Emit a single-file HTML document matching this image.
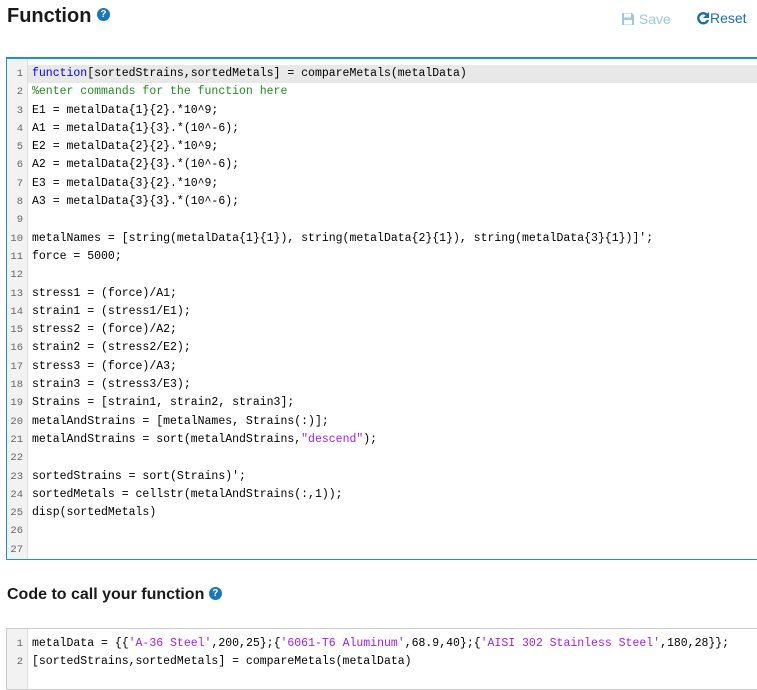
<!DOCTYPE html><html><head><style>
body{margin:0;background:#fff;font-family:"Liberation Sans",sans-serif;width:757px;height:683px;overflow:hidden;position:relative}
.h{position:absolute;font-weight:bold;color:#1a1a1a}
.q{display:inline-block;background:#1a78b4;color:#fff;border-radius:50%;text-align:center;font-weight:bold;vertical-align:middle}
.ed{position:absolute;left:6px;right:0;background:#fff;overflow:hidden}
.g{position:absolute;left:0;top:0;bottom:0;width:20px;background:#f2f2f2;border-right:1px solid #ddd}
pre{margin:0;font-family:"Liberation Mono",monospace;font-size:11.5px;line-height:18.3px;color:#000;position:relative}
.ln{display:inline-block;width:21px;text-align:right;padding-right:5px;box-sizing:border-box;color:#666;font-size:10.5px;margin-right:4px}
.k{color:#0000ff}.c{color:#228b22}.s{color:#a020f0}
.row{display:block;height:18.3px}
.cur{background:linear-gradient(to right,transparent 21px,#e8e8e8 21px)}
</style></head><body>
<div class="h" style="left:7px;top:5px;font-size:20px">Function <span class="q" style="width:13px;height:13px;font-size:10px;line-height:13px;margin-top:-4px">?</span></div>
<div style="position:absolute;left:621px;top:11px;color:#9cc8e4;font-size:14px"><svg width="14" height="14" viewBox="0 0 14 14" style="vertical-align:-2px"><path d="M1 1h10l2 2v10H1z" fill="#9cc8e4"/><rect x="3" y="1.5" width="7" height="4" fill="#fff"/><rect x="3" y="8" width="8" height="4.5" fill="#fff"/></svg> Save</div>
<div style="position:absolute;left:696px;top:10px;color:#1a6fa8;font-size:14px"><svg width="14" height="14" viewBox="0 0 14 14" style="vertical-align:-2px"><path d="M11.5 4.5A5 5 0 1 0 12 9" fill="none" stroke="#1a6fa8" stroke-width="2.4"/><path d="M13 1v6H7z" fill="#1a6fa8"/></svg>Reset</div>
<div class="ed" style="top:57px;height:500px;border:1px solid #1e8fe0;border-top:2px solid #1e8fe0;border-right:none">
<div class="g"></div>
<pre style="padding-top:6px"><span class="row cur"><span class="ln">1</span><span class="k">function</span>[sortedStrains,sortedMetals] = compareMetals(metalData)</span><span class="row"><span class="ln">2</span><span class="c">%enter commands for the function here</span></span><span class="row"><span class="ln">3</span>E1 = metalData{1}{2}.*10^9;</span><span class="row"><span class="ln">4</span>A1 = metalData{1}{3}.*(10^-6);</span><span class="row"><span class="ln">5</span>E2 = metalData{2}{2}.*10^9;</span><span class="row"><span class="ln">6</span>A2 = metalData{2}{3}.*(10^-6);</span><span class="row"><span class="ln">7</span>E3 = metalData{3}{2}.*10^9;</span><span class="row"><span class="ln">8</span>A3 = metalData{3}{3}.*(10^-6);</span><span class="row"><span class="ln">9</span></span><span class="row"><span class="ln">10</span>metalNames = [string(metalData{1}{1}), string(metalData{2}{1}), string(metalData{3}{1})]';</span><span class="row"><span class="ln">11</span>force = 5000;</span><span class="row"><span class="ln">12</span></span><span class="row"><span class="ln">13</span>stress1 = (force)/A1;</span><span class="row"><span class="ln">14</span>strain1 = (stress1/E1);</span><span class="row"><span class="ln">15</span>stress2 = (force)/A2;</span><span class="row"><span class="ln">16</span>strain2 = (stress2/E2);</span><span class="row"><span class="ln">17</span>stress3 = (force)/A3;</span><span class="row"><span class="ln">18</span>strain3 = (stress3/E3);</span><span class="row"><span class="ln">19</span>Strains = [strain1, strain2, strain3];</span><span class="row"><span class="ln">20</span>metalAndStrains = [metalNames, Strains(:)];</span><span class="row"><span class="ln">21</span>metalAndStrains = sort(metalAndStrains,<span class="s">"descend"</span>);</span><span class="row"><span class="ln">22</span></span><span class="row"><span class="ln">23</span>sortedStrains = sort(Strains)';</span><span class="row"><span class="ln">24</span>sortedMetals = cellstr(metalAndStrains(:,1));</span><span class="row"><span class="ln">25</span>disp(sortedMetals)</span><span class="row"><span class="ln">26</span></span><span class="row"><span class="ln">27</span></span></pre>
</div>
<div class="h" style="left:7px;top:586px;font-size:16px">Code to call your function <span class="q" style="width:13px;height:13px;font-size:10px;line-height:13px;margin-top:-3px">?</span></div>
<div class="ed" style="top:628px;height:60px;border:1px solid #ccc;border-right:none">
<div class="g"></div>
<pre style="padding-top:6px"><span class="row"><span class="ln">1</span>metalData = {{<span class="s">'A-36 Steel'</span>,200,25};{<span class="s">'6061-T6 Aluminum'</span>,68.9,40};{<span class="s">'AISI 302 Stainless Steel'</span>,180,28}};</span><span class="row"><span class="ln">2</span>[sortedStrains,sortedMetals] = compareMetals(metalData)</span></pre>
</div>
</body></html>
